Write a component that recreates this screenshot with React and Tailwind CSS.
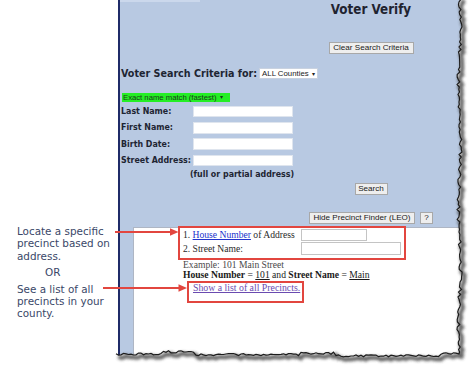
import React from "react";

function rng(seed) {
  let s = seed;
  return () => {
    s = (s * 9301 + 49297) % 233280;
    return s / 233280;
  };
}

function tornPoints() {
  const r = rng(11);
  const pts = [];
  for (let y = -3; y <= 352; y += 2.5) {
    const x = 459.5 + (r() - 0.5) * 3.2 + Math.sin(y / 19) * 1.1;
    pts.push([x, y]);
  }
  pts.push([459, 354]);
  for (let x = 456; x >= 114; x -= 2.5) {
    let base;
    if (x > 440) base = 353.5;
    else if (x > 335) base = 355.8;
    else if (x > 300) base = 353.2;
    else if (x > 195) base = 354.6;
    else if (x > 163) base = 351.8;
    else base = 354.2;
    pts.push([x, base + (r() - 0.5) * 2.2]);
  }
  return pts;
}

function TornEdge() {
  const pts = tornPoints();
  const line = pts.map((p, i) => (i === 0 ? "M" : "L") + p[0].toFixed(1) + " " + p[1].toFixed(1)).join(" ");
  const fill = line + " L114 375 L480 375 L480 -3 Z";
  return (
    <svg className="absolute left-0 top-0 pointer-events-none" width="474" height="370" viewBox="0 0 474 370">
      <defs>
        <filter id="blur" x="-10%" y="-10%" width="120%" height="120%">
          <feGaussianBlur stdDeviation="1.5" />
        </filter>
      </defs>
      <path d={fill} fill="#ffffff" />
      <path d={line} fill="none" stroke="#3a3a3a" strokeWidth="4" opacity="0.8" filter="url(#blur)" transform="translate(2.4 2.8)" />
      <path d={line} fill="none" stroke="#1c1c1c" strokeWidth="1.2" />
    </svg>
  );
}

function Arrows() {
  const c = "#e2463f";
  return (
    <svg className="absolute left-0 top-0 pointer-events-none" width="474" height="370" viewBox="0 0 474 370">
      <line x1="115" y1="232" x2="171" y2="232" stroke={c} strokeWidth="2" />
      <polygon points="178.5,232 170,228.2 170,235.8" fill={c} />
      <line x1="103" y1="288" x2="180" y2="288" stroke={c} strokeWidth="2" />
      <polygon points="187,288 178.5,284.2 178.5,291.8" fill={c} />
    </svg>
  );
}

function Btn({ children, className }) {
  return (
    <div
      className={
        "h-[12px] flex items-center justify-center bg-[#eeeeee] border border-[#a8a8a8] text-[8.1px] leading-none text-[#1a1a1a] font-['Liberation_Sans',sans-serif] " +
        className
      }
    >
      {children}
    </div>
  );
}

function Row({ label, children }) {
  return (
    <div className="h-[16.3px] flex items-center">
      <div className="w-[72px] text-[8.8px] font-bold text-[#1e2533] whitespace-nowrap">{label}</div>
      {children}
    </div>
  );
}

export default function App() {
  const sansC = "font-['DejaVu_Sans_Condensed','DejaVu_Sans',sans-serif]";
  return (
    <div className="relative w-[474px] h-[370px] overflow-hidden bg-white flex">
      <div className="w-[118px] shrink-0 pt-[225px] pl-[17px] text-[10.4px] text-[#3a4768] font-['DejaVu_Sans',sans-serif] whitespace-nowrap">
        <div className="leading-[12.4px]">
          Locate a specific
          <br />
          precinct based on
          <br />
          address.
        </div>
        <div className="leading-[12.4px] mt-[3.5px] pl-[28px]">OR</div>
        <div className="leading-[12.4px] mt-[4.5px]">
          See a list of all
          <br />
          precincts in your
          <br />
          county.
        </div>
      </div>

      <div className={"w-[356px] shrink-0 h-[370px] bg-[#b8c9e2] border-l-2 border-[#1f2b68] flex flex-col " + sansC}>
        <div className="h-[2px] w-[80px] bg-[#cbd8ec]" />
        <div className="ml-[189px] w-[124px] flex flex-col items-center">
          <div className="mt-[0px] text-[13.3px] leading-[16px] font-bold text-[#1f2330] whitespace-nowrap">Voter Verify</div>
          <Btn className="mt-[24px] w-[85px]">Clear Search Criteria</Btn>
        </div>

        <div className="mt-[13px] h-[13px] flex items-center pl-[1px]">
          <span className="text-[10.65px] font-bold text-[#1e2533] whitespace-nowrap">Voter Search Criteria for:</span>
          <div className="ml-[2px] w-[59px] h-[11px] bg-white border border-[#c9d2e0] flex items-center pl-[2px] text-[7.8px] leading-none text-[#222] font-['Liberation_Sans',sans-serif] whitespace-nowrap">
            ALL Counties <span className="ml-[3px] text-[6px]">▾</span>
          </div>
        </div>

        <div className="mt-[13px] ml-[2px] w-[108px] h-[9px] bg-[#25ee25] flex items-center pl-[1px] text-[7.7px] leading-none text-[#1b3a1b] font-['Liberation_Sans',sans-serif] whitespace-nowrap">
          Exact name match (fastest) <span className="ml-[3px] text-[5.5px]">▾</span>
        </div>

        <div className="mt-[1.5px] pl-[1px]">
          {["Last Name:", "First Name:", "Birth Date:", "Street Address:"].map((l) => (
            <Row key={l} label={l}>
              <div className="w-[100px] h-[11.5px] bg-white border border-[#dfe5ee]" />
            </Row>
          ))}
        </div>

        <div className="ml-[70px] h-[11px] leading-[11px] text-[8.8px] font-bold text-[#1e2533] whitespace-nowrap">(full or partial address)</div>

        <div className="ml-[189px] w-[124px] flex flex-col items-center">
          <Btn className="mt-[3px] w-[33px]">Search</Btn>
        </div>

        <div className="ml-[189px] w-[124px] mt-[17px] flex items-center gap-[5px]">
          <Btn className="w-[106px]">Hide Precinct Finder (LEO)</Btn>
          <Btn className="w-[13px]">?</Btn>
        </div>

        <div className="mt-[3px] ml-[13px] flex-1 bg-white border-l border-t border-[#aeb6c4] font-['Liberation_Serif',serif] text-[9.6px] text-[#2a2a2a]">
          <div className="-mt-[2px] ml-[44px] w-[228px] h-[34px] border-2 border-[#e2463f] pl-[3px] flex flex-col">
            <div className="h-[14px] flex items-center">
              <div className="w-[118px] whitespace-nowrap">
                1. <span className="text-[#2233cc] underline">House Number</span> of Address
              </div>
              <div className="w-[66px] h-[12px] border border-[#c4c4c4] bg-white" />
            </div>
            <div className="h-[14px] flex items-center">
              <div className="w-[118px] whitespace-nowrap">2. Street Name:</div>
              <div className="w-[100px] h-[13px] border border-[#c4c4c4] bg-white" />
            </div>
          </div>
          <div className="ml-[49px] leading-[10px] text-[#4a4a4a] whitespace-nowrap">Example: 101 Main Street</div>
          <div className="ml-[49px] leading-[10px] text-[#1a1a1a] whitespace-nowrap">
            <b>House Number</b> = <span className="underline">101</span> and <b>Street Name</b> = <span className="underline">Main</span>
          </div>
          <div className="mt-[1px] ml-[53px] w-[117px] h-[22px] border-2 border-[#e2463f] pl-[4px]">
            <div className="leading-[10px] text-[9.8px] text-[#6a4bb0] underline whitespace-nowrap">Show a list of all Precincts.</div>
          </div>
        </div>
      </div>

      <TornEdge />
      <Arrows />
    </div>
  );
}
